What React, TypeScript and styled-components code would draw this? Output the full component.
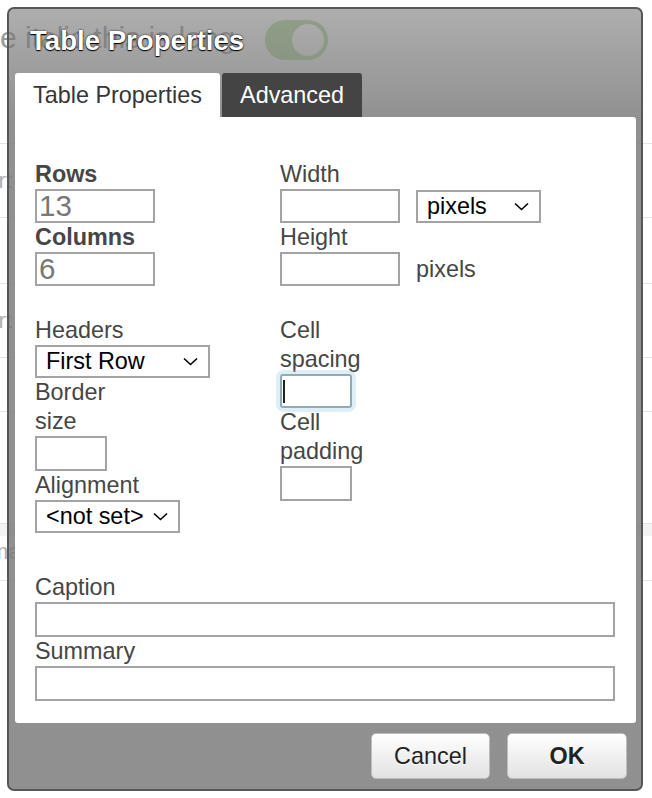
import styled, { createGlobalStyle } from 'styled-components';

const GlobalStyle = createGlobalStyle`
    html, body {
        margin: 0;
        padding: 0;
        background: #fff;
    }
    body {
        font-family: "Liberation Sans", Arial, sans-serif;
    }
`;

// ---- page behind the modal ----
const Page = styled.div`
    position: relative;
    width: 652px;
    height: 798px;
    overflow: hidden;
    background: #fff;
`;
const PageHead = styled.div`
    display: flex;
    align-items: flex-start;
    gap: 30px;
    height: 143px;
    box-sizing: border-box;
    padding-top: 20px;
`;
const GhostTitle = styled.div`
    font-size: 30px;
    line-height: 34px;
    margin-top: 1px;
    color: #9a9a9a;
    white-space: nowrap;
`;
const Toggle = styled.div`
    width: 63px;
    height: 40px;
    border-radius: 20px;
    background: #b5dca0;
    display: flex;
    align-items: center;
    justify-content: flex-end;
    padding: 0 4px;
    box-sizing: border-box;
`;
const Knob = styled.div`
    width: 32px;
    height: 32px;
    border-radius: 50%;
    background: #fff;
`;
const PageRow = styled.div<{ $h: number; $shade?: boolean }>`
    height: ${p => p.$h}px;
    border-top: 1px solid #e4e4e4;
    box-sizing: border-box;
    display: flex;
    align-items: center;
    background: ${p => p.$shade ? 'linear-gradient(#f3f3f3 0 12px, #fff 12px)' : '#fff'};
`;
const RowText = styled.span`
    margin-left: -43px;
    font-size: 22px;
    color: #b0b0b0;
`;

// ---- dialog ----
const Dialog = styled.div`
    position: absolute;
    top: 7px;
    left: 7px;
    width: 636px;
    box-sizing: border-box;
    border: 2px solid #575757;
    border-radius: 7px;
    padding: 0 5px 0 6px;
    background: linear-gradient(rgba(120, 120, 120, 0.6), rgba(120, 120, 120, 0.82) 110px);
    display: flex;
    flex-direction: column;
`;
const Title = styled.h1`
    margin: 0;
    height: 64px;
    box-sizing: border-box;
    padding: 16px 0 0 15px;
    font-size: 27.6px;
    line-height: 32px;
    font-weight: bold;
    color: #fff;
    text-shadow: 0 0 2px #000, 0 1px 1px #000;
`;
const TabBar = styled.div`
    display: flex;
    gap: 2px;
`;
const Tab = styled.div<{ $active?: boolean }>`
    height: 44px;
    line-height: 44px;
    padding: 0 18px;
    font-size: 23.4px;
    border-radius: 3px 3px 0 0;
    background: ${p => p.$active ? '#fff' : '#444'};
    color: ${p => p.$active ? '#363636' : '#fff'};
`;
const Panel = styled.div`
    background: #fff;
    border-radius: 0 3px 3px 3px;
    padding: 43px 21px 22px 20px;
    color: #464646;
    font-size: 23.4px;
`;
const Columns = styled.div`
    display: grid;
    grid-template-columns: 245px 1fr;
    align-items: start;
`;
const Column = styled.div`
    display: flex;
    flex-direction: column;
    align-items: flex-start;
`;
const Label = styled.div<{ $bold?: boolean; $narrow?: boolean }>`
    line-height: 29px;
    font-weight: ${p => p.$bold ? 'bold' : 'normal'};
    width: ${p => p.$narrow ? '72px' : 'auto'};
`;
const Spacer = styled.div<{ $h: number }>`
    height: ${p => p.$h}px;
`;
const TextInput = styled.input<{ $w: string; $h?: number }>`
    display: block;
    width: ${p => p.$w};
    height: ${p => p.$h ?? 34}px;
    box-sizing: border-box;
    margin: 0;
    padding: 0 2px;
    border: 2px solid #a3a3a3;
    border-radius: 0;
    background: #fff;
    font-family: inherit;
    font-size: 29.5px;
    color: #777;
    outline: none;
`;
const FocusWrap = styled.div`
    position: relative;
    border-radius: 4px;
    box-shadow: 0 0 0 4px rgba(160, 205, 232, 0.35);

    & > input {
        border-color: #92a9b8;
        border-radius: 3px;
    }
    &::after {
        content: "";
        position: absolute;
        left: 3px;
        top: 6px;
        width: 1.5px;
        height: 23px;
        background: #222;
    }
`;
const Select = styled.div<{ $w: number }>`
    width: ${p => p.$w}px;
    height: 33px;
    box-sizing: border-box;
    border: 2px solid #a3a3a3;
    padding: 0 10px 0 9px;
    display: flex;
    align-items: center;
    justify-content: space-between;
    background: #fff;
    color: #000;
    font-size: 23.4px;
    white-space: nowrap;
`;
const InlineRow = styled.div`
    display: flex;
    align-items: center;
    gap: 16px;
`;
const Unit = styled.span`
    color: #464646;
`;
const Wide = styled.div`
    margin-top: 40px;
    display: flex;
    flex-direction: column;
`;
const Footer = styled.div`
    display: flex;
    justify-content: flex-end;
    gap: 17px;
    padding: 10px 9px 10px 0;
`;
const Button = styled.button<{ $primary?: boolean; $w: number }>`
    width: ${p => p.$w}px;
    height: 46px;
    border: 1px solid #bdbdbd;
    border-radius: 5px;
    background: linear-gradient(#fff, #e2e2e2);
    font-family: inherit;
    font-size: 23.4px;
    font-weight: ${p => p.$primary ? 'bold' : 'normal'};
    color: #222;
    text-shadow: 0 1px 0 #fff;
    cursor: pointer;
`;

const Chevron = () => (
    <svg width="15" height="9" viewBox="0 0 15 9">
        <path d="M1 1.5 L7.5 7.5 L14 1.5" fill="none" stroke="#000" strokeWidth="1.6" />
    </svg>
);

const Dropdown = ({ value, width }: { value: string; width: number }) => (
    <Select $w={width}>
        <span>{value}</span>
        <Chevron />
    </Select>
);

const pageRows = [
    { h: 74, text: 'Insert' },
    { h: 66 },
    { h: 74, text: 'Insert' },
    { h: 54 },
    { h: 112 },
    { h: 57, text: 'Forma', shade: true },
    { h: 218 },
];

const App = () => {
    return (
        <Page>
            <GlobalStyle />
            <PageHead>
                <GhostTitle>e italic this is long</GhostTitle>
                <Toggle>
                    <Knob />
                </Toggle>
            </PageHead>
            {pageRows.map((r, i) => (
                <PageRow key={i} $h={r.h} $shade={r.shade}>
                    {r.text && <RowText>{r.text}</RowText>}
                </PageRow>
            ))}

            <Dialog>
                <Title>Table Properties</Title>
                <TabBar>
                    <Tab $active>Table Properties</Tab>
                    <Tab>Advanced</Tab>
                </TabBar>
                <Panel>
                    <Columns>
                        <Column>
                            <Label $bold>Rows</Label>
                            <TextInput $w="120px" defaultValue="13" />
                            <Label $bold>Columns</Label>
                            <TextInput $w="120px" defaultValue="6" />
                            <Spacer $h={30} />
                            <Label>Headers</Label>
                            <Dropdown value="First Row" width={175} />
                            <Label $narrow>Border size</Label>
                            <TextInput $w="72px" $h={35} />
                            <Label>Alignment</Label>
                            <Dropdown value="<not set>" width={145} />
                        </Column>
                        <Column>
                            <Label>Width</Label>
                            <InlineRow>
                                <TextInput $w="120px" />
                                <Dropdown value="pixels" width={125} />
                            </InlineRow>
                            <Label>Height</Label>
                            <InlineRow>
                                <TextInput $w="120px" />
                                <Unit>pixels</Unit>
                            </InlineRow>
                            <Spacer $h={30} />
                            <Label $narrow>Cell spacing</Label>
                            <FocusWrap>
                                <TextInput $w="72px" />
                            </FocusWrap>
                            <Label $narrow>Cell padding</Label>
                            <TextInput $w="72px" $h={35} />
                        </Column>
                    </Columns>
                    <Wide>
                        <Label>Caption</Label>
                        <TextInput $w="100%" $h={35} />
                        <Label>Summary</Label>
                        <TextInput $w="100%" $h={35} />
                    </Wide>
                </Panel>
                <Footer>
                    <Button $w={119}>Cancel</Button>
                    <Button $w={120} $primary>OK</Button>
                </Footer>
            </Dialog>
        </Page>
    );
};

export default App;
